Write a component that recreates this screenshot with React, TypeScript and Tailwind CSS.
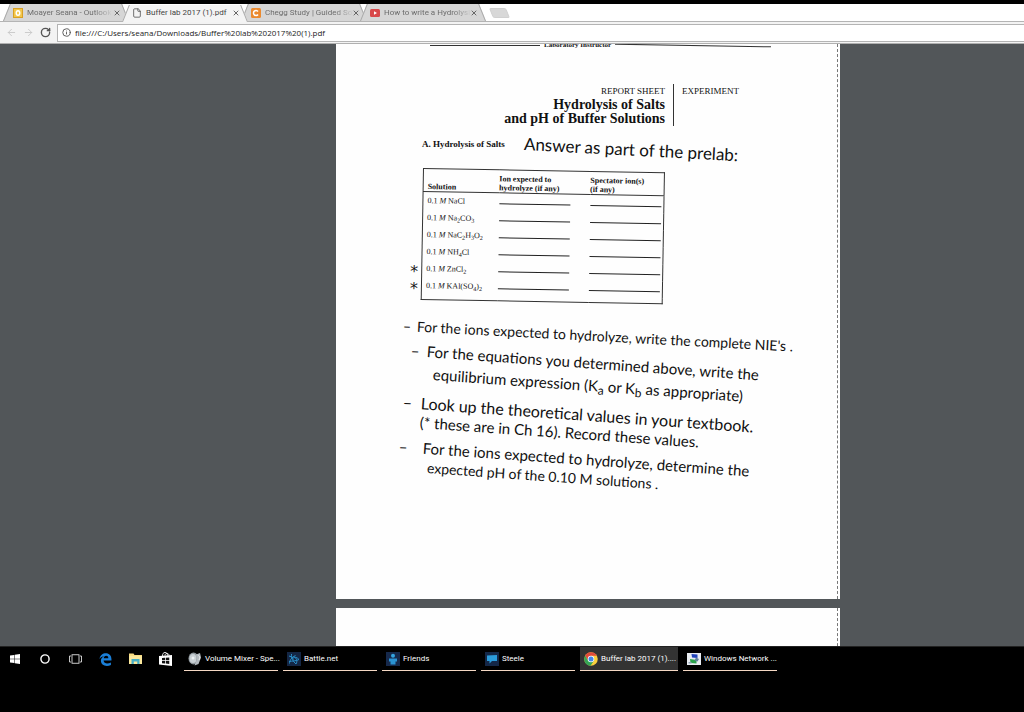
import type { ReactNode } from 'react';
import { ArrowLeft, ArrowRight, File, Info, RotateCw, X } from 'lucide-react';

interface Tab {
  title: string;
  icon: ReactNode;
  active?: boolean;
}

interface Task {
  title: string;
  icon: ReactNode;
  active?: boolean;
}

interface Note {
  text: ReactNode;
  className: string;
  dash?: string;
}

const OutlookIcon = () => (
  <svg viewBox="0 0 20 20" className="size-[10px]">
    <rect x="1" y="1" width="18" height="18" fill="#f3c64a" stroke="#d8a024" strokeWidth="2" />
    <ellipse cx="10" cy="10" rx="3.500" ry="4.500" fill="none" stroke="#fff" strokeWidth="3" />
  </svg>
);

const CheggIcon = () => (
  <svg viewBox="0 0 20 20" className="size-[10px]">
    <rect width="20" height="20" rx="3" fill="#eb8a2f" />
    <path d="M14 7a5 5 0 1 0 0 6" fill="none" stroke="#fff" strokeWidth="3" />
  </svg>
);

const YoutubeIcon = () => (
  <svg viewBox="0 0 20 16" className="h-2 w-[10px]">
    <rect width="20" height="16" rx="3" fill="#d8484a" />
    <path d="M8 4.500l6 3.500-6 3.500z" fill="#fff" />
  </svg>
);

const StartIcon = () => (
  <svg viewBox="0 0 20 20" className="size-[10px]" fill="#fff">
    <path d="M0 3l8.500-1.200v7.700H0zM9.500 1.600L20 0v9.500H9.500zM0 10.500h8.500v7.700L0 17zM9.500 10.500H20V20L9.500 18.400z" />
  </svg>
);

const CortanaIcon = () => (
  <svg viewBox="0 0 20 20" className="size-[10px]">
    <circle cx="10" cy="10" r="8.200" fill="none" stroke="#fff" strokeWidth="2.800" />
  </svg>
);

const TaskViewIcon = () => (
  <svg viewBox="0 0 26 20" className="h-[10px] w-[13px]" fill="none" stroke="#ddd" strokeWidth="1.800">
    <rect x="6" y="1.500" width="14" height="17" />
    <path d="M4 4H1v12h3M22 4h3v12h-3" />
  </svg>
);

const EdgeIcon = () => (
  <svg viewBox="0 0 24 24" className="size-[13px]">
    <path
      d="M1 11C2 4 7 .5 12.500.5 19 .5 23 5 23 11.500V14H8.500c.3 4 3.500 5.500 6.500 5.500 2.500 0 5-.7 7-2v4.700c-2.200 1-4.800 1.600-7.500 1.600C8 23.800 3.500 20 3.500 14.500 3.500 10.500 6 7.500 9.500 6 6 6 3 8 1 11zm7.700-1.500h8.500c0-2.700-1.500-4.300-4-4.300s-4.200 1.800-4.500 4.300z"
      fill="#1a7fd8"
    />
  </svg>
);

const FolderIcon = () => (
  <svg viewBox="0 0 26 24" className="h-3 w-[13px]">
    <path d="M0 1h9l2 3h15v18H0z" fill="#f7dc82" />
    <path d="M0 6h26v16H0z" fill="#fbe89c" />
    <path d="M5 22v-10h16v10h-4.500v-5h-7v5z" fill="#45aec6" />
  </svg>
);

const StoreIcon = () => (
  <svg viewBox="0 0 26 28" className="h-[14px] w-[13px]">
    <path d="M0 8l26-2v22L0 25z" fill="#fff" />
    <path d="M7 8C7 3 9 1 12 1s5 2 5 6M12 7c0-3 2-4 4-4s4 1 4 4" fill="none" stroke="#fff" strokeWidth="1.800" />
    <path d="M6 12l6-.5v5H6zM13.500 11.400l7-.6v5.700h-7zM6 18h6v5l-6-.6zM13.500 18h7v5.800l-7-.7z" fill="#111" />
  </svg>
);

const MixerIcon = () => (
  <svg viewBox="0 0 28 28" className="size-[14px] shrink-0">
    <ellipse cx="11" cy="13" rx="10" ry="12" fill="#8f979c" />
    <ellipse cx="10" cy="13" rx="7" ry="9" fill="#c9d0d4" />
    <path d="M16 5l8-3 2 9-5 13-8 3 5-12z" fill="#b3babf" />
    <circle cx="10" cy="12" r="3" fill="#edf1f3" />
    <path d="M21 7c3 2 3 6 1 9" stroke="#fff" strokeWidth="1.500" fill="none" />
  </svg>
);

const BattleNetIcon = () => (
  <svg viewBox="0 0 28 28" className="size-[14px] shrink-0">
    <rect width="28" height="28" fill="#142644" />
    <g fill="none" stroke="#2a8fc9" strokeWidth="2">
      <path d="M4 19c6-1 15-1 20-4-3-4-9-6-15-4" />
      <path d="M9 4c-1 7 3 15 9 20 3-5 2-10-3-14" />
      <path d="M5 23c0-6 4-12 12-16M4 8l6 2 3 5" />
    </g>
  </svg>
);

const FriendsIcon = () => (
  <svg viewBox="0 0 28 28" className="size-[14px] shrink-0">
    <rect width="28" height="28" fill="#16294b" />
    <circle cx="14" cy="7.500" r="4" fill="#35a5e0" />
    <path d="M6 13h16v6h-3v6H9v-6H6z" fill="#2a93d3" />
  </svg>
);

const ChatIcon = () => (
  <svg viewBox="0 0 28 28" className="size-[14px] shrink-0">
    <rect width="28" height="28" fill="#142747" />
    <path d="M4 7l20-1v12H14l-5 5v-5H4z" fill="#2b9cdb" />
  </svg>
);

const ChromeIcon = () => (
  <svg viewBox="0 0 28 28" className="size-[14px] shrink-0">
    <circle cx="14" cy="14" r="13.500" fill="#f9cf3d" />
    <path d="M2.300 7.300A13.500 13.500 0 0 1 25.700 7.300H14L8.200 17.400z" fill="#e04a3c" />
    <path d="M2.300 7.300A13.500 13.500 0 0 0 13 27.500l6.800-10.100H8.200z" fill="#35a555" />
    <circle cx="14" cy="14" r="6.500" fill="#fff" />
    <circle cx="14" cy="14" r="5" fill="#4285e8" />
  </svg>
);

const NetworkIcon = () => (
  <svg viewBox="0 0 28 24" className="h-3 w-[14px] shrink-0">
    <rect width="28" height="24" fill="#e9edf2" />
    <path d="M9 2l12 1v7l-11-1z" fill="#1f41b8" />
    <path d="M6 12l13 2v7l-12-1z" fill="#2aa24b" />
    <path d="M18 9l6 3-3 5-6-2z" fill="#5f7f9c" />
    <path d="M3 18h6v3H3z" fill="#8fa1b5" />
  </svg>
);

const tabs: Tab[] = [
  { title: 'Moayer Seana - Outlook', icon: <OutlookIcon /> },
  { title: 'Buffer lab 2017 (1).pdf', icon: <File size={10} color="#555" />, active: true },
  { title: 'Chegg Study | Guided So', icon: <CheggIcon /> },
  { title: 'How to write a Hydrolysi', icon: <YoutubeIcon /> },
];

const launchers = [
  { label: 'Start', icon: <StartIcon /> },
  { label: 'Cortana', icon: <CortanaIcon /> },
  { label: 'Task View', icon: <TaskViewIcon /> },
  { label: 'Microsoft Edge', icon: <EdgeIcon /> },
  { label: 'File Explorer', icon: <FolderIcon /> },
  { label: 'Store', icon: <StoreIcon /> },
];

const tasks: Task[] = [
  { title: 'Volume Mixer - Spe...', icon: <MixerIcon /> },
  { title: 'Battle.net', icon: <BattleNetIcon /> },
  { title: 'Friends', icon: <FriendsIcon /> },
  { title: 'Steele', icon: <ChatIcon /> },
  { title: 'Buffer lab 2017 (1)....', icon: <ChromeIcon />, active: true },
  { title: 'Windows Network ...', icon: <NetworkIcon /> },
];

const Sub = ({ children }: { children: ReactNode }) => (
  <sub className="bottom-[-2px] text-[6px]">{children}</sub>
);

const NoteSub = ({ children }: { children: ReactNode }) => (
  <sub className="bottom-[-3px] text-[12px] leading-none">{children}</sub>
);

const solutions: { id: string; formula: ReactNode; starred?: boolean }[] = [
  { id: 'nacl', formula: 'NaCl' },
  { id: 'na2co3', formula: <>Na<Sub>2</Sub>CO<Sub>3</Sub></> },
  { id: 'nac2h3o2', formula: <>NaC<Sub>2</Sub>H<Sub>3</Sub>O<Sub>2</Sub></> },
  { id: 'nh4cl', formula: <>NH<Sub>4</Sub>Cl</> },
  { id: 'zncl2', formula: <>ZnCl<Sub>2</Sub></>, starred: true },
  { id: 'kalso4', formula: <>KAl(SO<Sub>4</Sub>)<Sub>2</Sub></>, starred: true },
];

const notes: Note[] = [
  { dash: 'w-[14px]', text: "For the ions expected to hydrolyze, write the complete NIE's .", className: 'ml-[67px] rotate-3 text-[14px]' },
  { dash: 'w-4', text: 'For the equations you determined above, write the', className: 'mt-1 ml-[75px] rotate-[4deg] text-[15px]' },
  {
    text: <>equilibrium expression (K<NoteSub>a</NoteSub> or K<NoteSub>b</NoteSub> as appropriate)</>,
    className: 'mt-1 ml-[97px] rotate-[4deg] text-[15px]',
  },
  { dash: 'w-[18px]', text: 'Look up the theoretical values in your textbook.', className: 'mt-2 ml-[67px] rotate-[4deg] text-[16px]' },
  { text: '(* these are in Ch 16). Record these values.', className: 'ml-[84px] rotate-[4deg] text-[15px]' },
  { dash: 'w-6', text: 'For the ions expected to hydrolyze, determine the', className: 'mt-1 ml-[63px] rotate-[4deg] text-[15px]' },
  { text: 'expected pH of the 0.10 M solutions .', className: 'mt-[2px] ml-[91px] rotate-[4deg] text-[14px]' },
];

function TabStrip() {
  return (
    <div className="flex h-[18px] items-end border-b border-[#b4b4b4] bg-white pl-[3px]">
      {tabs.map((tab) => (
        <div
          key={tab.title}
          className={`relative -mr-[7px] flex h-[17px] w-[126px] items-center pr-2 pl-[10px] ${tab.active ? 'z-10' : ''}`}
        >
          <span
            className={`absolute bottom-0 left-0 h-full w-2/3 origin-bottom -skew-x-[22deg] border-l border-[#a8a8a8] ${tab.active ? '-mb-px bg-[#f4f4f4]' : 'bg-[#d6d6d6]'}`}
          />
          <span
            className={`absolute right-0 bottom-0 h-full w-2/3 origin-bottom skew-x-[22deg] border-r border-[#a8a8a8] ${tab.active ? '-mb-px bg-[#f4f4f4]' : 'bg-[#d6d6d6]'}`}
          />
          <span className="relative shrink-0">{tab.icon}</span>
          <button
            className={`relative ml-1 shrink-0 text-left text-[8px] whitespace-nowrap ${tab.active ? 'text-[#444]' : 'bg-linear-to-r from-[#666] from-80% to-[#ccc] bg-clip-text text-transparent'}`}
          >
            {tab.title}
          </button>
          <button aria-label="Close tab" className="relative ml-auto">
            <X size={8} strokeWidth={3} color="#666" />
          </button>
        </div>
      ))}
      <button
        aria-label="New tab"
        className="mb-[3px] ml-3 h-[10px] w-[17px] skew-x-[22deg] rounded-xs border border-[#d0d0d0] bg-[#d8d8d8]"
      />
    </div>
  );
}

function Toolbar() {
  return (
    <div className="flex h-[22px] items-center border-b border-[#b0b0b0] bg-[#f3f3f3] pl-[6px]">
      <button aria-label="Back"><ArrowLeft size={11} color="#c8c8c8" /></button>
      <button aria-label="Forward" className="ml-[6px]"><ArrowRight size={11} color="#c8c8c8" /></button>
      <button aria-label="Reload" className="ml-[6px]"><RotateCw size={11} strokeWidth={3} color="#555" /></button>
      <div className="ml-[6px] flex h-[18px] flex-1 items-center border-y border-l border-[#b4b4b4] bg-white pl-1">
        <Info size={9} strokeWidth={2.5} color="#555" />
        <input
          aria-label="Address"
          readOnly
          value="file:///C:/Users/seana/Downloads/Buffer%20lab%202017%20(1).pdf"
          className="ml-1 flex-1 bg-transparent font-['Open_Sans','Noto_Sans',sans-serif] text-[8px] text-[#222] outline-none"
        />
      </div>
    </div>
  );
}

function SaltsTable() {
  return (
    <table className="mt-[14px] ml-[87px] w-[242px] origin-top-left rotate-1 border-collapse border border-[#333] text-left text-[8px] leading-[9px]">
      <thead className="border-b border-[#333]">
        <tr className="h-[23px] align-bottom">
          <th className="w-[76px] pl-1">Solution</th>
          <th className="w-[91px]">Ion expected to<br />hydrolyze (if any)</th>
          <th>Spectator ion(s)<br />(if any)</th>
        </tr>
      </thead>
      <tbody>
        {solutions.map((row) => (
          <tr key={row.id} className="h-[17px]">
            <td className="relative pl-1 whitespace-nowrap">
              {row.starred && (
                <span className="absolute top-1 -left-[12px] font-['DejaVu_Sans',sans-serif] text-[16px] leading-4">*</span>
              )}
              0.1 <i>M</i> {row.formula}
            </td>
            <td><div className="mt-1 w-[71px] border-b border-[#222]" /></td>
            <td><div className="mt-1 w-[71px] border-b border-[#222]" /></td>
          </tr>
        ))}
        <tr className="h-[6px]"><td colSpan={3} /></tr>
      </tbody>
    </table>
  );
}

function ReportPage() {
  return (
    <article className="h-[555px] shrink-0 overflow-hidden bg-[#fefefe] pr-[2px] font-['Liberation_Serif',serif] text-[#111]">
      <div className="h-full overflow-hidden border-r border-dashed border-[#777]">
        <div className="-mt-[3px] flex h-2 items-center pl-[94px]">
          <span className="h-px w-[110px] bg-[#333]" />
          <span className="mx-1 text-[7px] leading-2 font-bold">Laboratory Instructor</span>
          <span className="h-px w-[156px] rotate-1 bg-[#333]" />
        </div>

        <header className="mt-[35px] flex justify-start">
          <div className="w-[329px] text-right">
            <p className="text-[9px] leading-[14px]">REPORT SHEET</p>
            <h1 className="text-[14px] leading-[14px] font-bold">
              Hydrolysis of Salts<br />and pH of Buffer Solutions
            </h1>
          </div>
          <p className="ml-2 border-l border-[#333] pl-2 text-[9px] leading-[14px]">EXPERIMENT</p>
        </header>

        <div className="mt-2 flex items-center pl-[86px]">
          <h2 className="w-[86px] text-[9px] leading-5 font-bold whitespace-nowrap">A. Hydrolysis of Salts</h2>
          <p className="ml-4 origin-left rotate-3 font-['Lato',sans-serif] text-[17px] leading-5 whitespace-nowrap">
            Answer as part of the prelab:
          </p>
        </div>

        <SaltsTable />

        <div className="mt-4 font-['Lato',sans-serif]">
          {notes.map((note, i) => (
            <p key={i} className={`flex origin-left leading-5 whitespace-nowrap ${note.className}`}>
              {note.dash && <span className={`shrink-0 ${note.dash}`}>–</span>}
              <span>{note.text}</span>
            </p>
          ))}
        </div>
      </div>
    </article>
  );
}

function Taskbar() {
  return (
    <footer className="flex h-[66px] shrink-0 items-start border-t border-[#222] bg-black text-white">
      {launchers.map((item) => (
        <button key={item.label} aria-label={item.label} className="flex h-6 w-[30px] items-center justify-center">
          {item.icon}
        </button>
      ))}
      <div className="ml-1 flex gap-[5px]">
        {tasks.map((task) => (
          <button
            key={task.title}
            className={`flex h-6 items-center gap-[3px] border-b border-[#f5d8c4] pl-1 text-[8px] whitespace-nowrap ${task.active ? 'w-[98px] bg-[#333]' : 'w-[94px]'}`}
          >
            {task.icon}
            {task.title}
          </button>
        ))}
      </div>
    </footer>
  );
}

export default function App() {
  return (
    <div className="flex h-screen flex-col overflow-hidden bg-black pt-1 font-['Roboto','Noto_Sans',sans-serif]">
      <TabStrip />
      <Toolbar />
      <main className="flex min-h-0 flex-1 overflow-hidden bg-[#525659]">
        <div className="flex-[336]" />
        <div className="flex w-[504px] shrink-0 flex-col gap-[9px]">
          <ReportPage />
          <article className="h-[555px] shrink-0 bg-[#fefefe] pr-[2px]">
            <div className="h-full border-r border-dashed border-[#777]" />
          </article>
        </div>
        <div className="flex-[184]" />
      </main>
      <Taskbar />
    </div>
  );
}
